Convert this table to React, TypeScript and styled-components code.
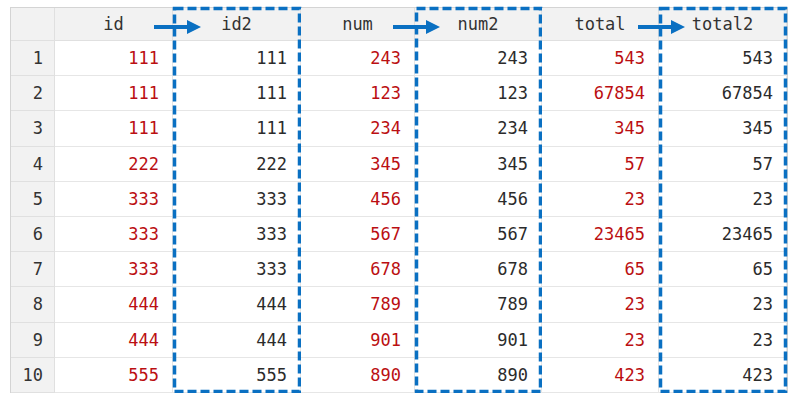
import styled, { createGlobalStyle } from 'styled-components';

const GlobalStyle = createGlobalStyle`
  html, body {
    margin: 0;
    padding: 0;
    background: #ffffff;
  }
`;

const BLUE = '#0a70c2';
const HEADER_H = 33;
const ROW_H = 35.2;

type Col = {
  name: string;
  width: number;
  values: string[];
  copy?: boolean;
  arrowLeft?: number;
};

const ids = ['111', '111', '111', '222', '333', '333', '333', '444', '444', '555'];
const nums = ['243', '123', '234', '345', '456', '567', '678', '789', '901', '890'];
const totals = ['543', '67854', '345', '57', '23', '23465', '65', '23', '23', '423'];

const columns: Col[] = [
  { name: 'id', width: 118, values: ids },
  { name: 'id2', width: 128, values: ids, copy: true, arrowLeft: -19 },
  { name: 'num', width: 114, values: nums },
  { name: 'num2', width: 127, values: nums, copy: true, arrowLeft: -22 },
  { name: 'total', width: 117, values: totals },
  { name: 'total2', width: 128, values: totals, copy: true, arrowLeft: -21 },
];

const Page = styled.div`
  padding: 7px 0 0 10px;
  font-family: 'DejaVu Sans Mono', 'Liberation Mono', monospace;
  font-size: 17px;
`;

const Table = styled.div`
  display: inline-flex;
  border-top: 1px solid #d4d4d4;
  border-left: 1px solid #d4d4d4;
  border-right: 1px solid #d4d4d4;
  box-shadow: 0 1px 0 #b8b8b8;
`;

const Column = styled.div<{ $w: number }>`
  position: relative;
  display: flex;
  flex-direction: column;
  width: ${(p) => p.$w}px;
`;

const HeadCell = styled.div`
  height: ${HEADER_H}px;
  box-sizing: border-box;
  display: flex;
  align-items: center;
  justify-content: center;
  background: #f2f2f2;
  color: #333333;
  border-right: 1px solid #e0e0e0;
  border-bottom: 1px solid #e0e0e0;
`;

const Cell = styled.div<{ $tone: 'red' | 'dark' }>`
  height: ${ROW_H}px;
  box-sizing: border-box;
  display: flex;
  align-items: center;
  justify-content: flex-end;
  padding-right: 13px;
  background: #ffffff;
  color: ${(p) => (p.$tone === 'red' ? '#bb0f12' : '#2b2b2b')};
  border-right: 1px solid #e6e6e6;
  border-bottom: 1px solid #e6e6e6;
`;

const IndexCell = styled(Cell)`
  background: #f2f2f2;
  color: #333333;
  padding-right: 11px;
  border-right-color: #e0e0e0;
  border-bottom-color: #e0e0e0;
`;

const Dashed = styled.svg`
  position: absolute;
  left: 0;
  top: -1px;
  pointer-events: none;
  overflow: visible;
`;

const Arrow = styled.svg`
  position: absolute;
  top: 11px;
  overflow: visible;
`;

function CopyFrame({ width, height }: { width: number; height: number }) {
  return (
    <Dashed width={width} height={height}>
      <rect
        x={1.5}
        y={1.5}
        width={width - 3}
        height={height - 3}
        fill="none"
        stroke={BLUE}
        strokeWidth={3.5}
        strokeDasharray="9 4"
      />
    </Dashed>
  );
}

function CopyArrow({ left }: { left: number }) {
  return (
    <Arrow width={48} height={16} style={{ left }}>
      <rect x={0} y={6} width={34} height={4} fill={BLUE} />
      <path d="M33 1 L47 8 L33 15 Z" fill={BLUE} />
    </Arrow>
  );
}

export default function App() {
  const frameH = HEADER_H + ROW_H * 10 + 1;
  return (
    <Page>
      <GlobalStyle />
      <Table>
        <Column $w={44}>
          <HeadCell />
          {ids.map((_, i) => (
            <IndexCell key={i} $tone="dark">
              {i + 1}
            </IndexCell>
          ))}
        </Column>
        {columns.map((c) => (
          <Column key={c.name} $w={c.width}>
            <HeadCell>{c.name}</HeadCell>
            {c.values.map((v, i) => (
              <Cell key={i} $tone={c.copy ? 'dark' : 'red'}>
                {v}
              </Cell>
            ))}
            {c.copy && <CopyFrame width={c.width} height={frameH} />}
            {c.copy && <CopyArrow left={c.arrowLeft ?? -20} />}
          </Column>
        ))}
      </Table>
    </Page>
  );
}
